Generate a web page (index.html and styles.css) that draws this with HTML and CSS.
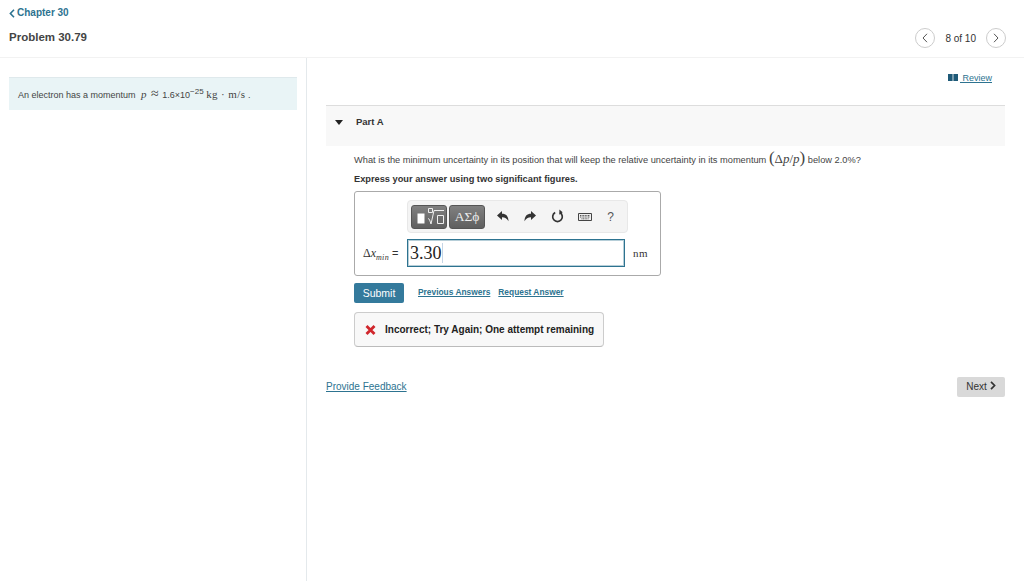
FILE: index.html
```html
<!DOCTYPE html>
<html lang="en">
<head>
    <meta charset="UTF-8">
    <title>Problem 30.79</title>
    <link rel="stylesheet" href="styles.css">
</head>
<body>
    <div class="header">
        <div class="header-titles">
            <a class="chapter-link" href="#"><svg class="chapter-arrow" width="6" height="9" viewBox="0 0 6 9"><path d="M5 .8 1.4 4.5 5 8.2" fill="none" stroke="#2d7390" stroke-width="1.6"/></svg>Chapter 30</a>
            <h1>Problem 30.79</h1>
        </div>
        <div class="pager">
            <span class="pager-btn"><svg width="6" height="10" viewBox="0 0 6 10"><path d="M5 .8 1 5l4 4.2" fill="none" stroke="#555" stroke-width="1"/></svg></span>
            <span class="pager-text">8 of 10</span>
            <span class="pager-btn"><svg width="6" height="10" viewBox="0 0 6 10"><path d="M1 .8 5 5 1 9.2" fill="none" stroke="#555" stroke-width="1"/></svg></span>
        </div>
    </div>
    <div class="main">
        <div class="sidebar">
            <div class="statement">An electron has a momentum <span class="math symbol-p"><i>p</i></span> <span class="math symbol-approx">≈</span> 1.6×10<sup class="exp">−25</sup> <span class="math unit-math">kg · m/s</span> .</div>
        </div>
        <div class="content">
            <div class="review-row">
                <a class="review" href="#"><svg class="review-icon" width="10" height="7" viewBox="0 0 10 7"><path d="M0 0h4.600v7H0zM5.400 0H10v7H5.400z" fill="#1f5a78"/></svg>&nbsp;Review</a>
            </div>
            <div class="part-head">
                <svg class="part-arrow" width="8" height="5" viewBox="0 0 8 5"><path d="M0 0h8L4 5z" fill="#222"/></svg>
                <span>Part A</span>
            </div>
            <div class="part-body">
                <p class="question">What is the minimum uncertainty in its position that will keep the relative uncertainty in its momentum <span class="math q-math"><span class="paren">(</span>Δ<i>p</i>/<i>p</i><span class="paren">)</span></span> below 2.0%?</p>
                <p class="express">Express your answer using two significant figures.</p>
                <div class="answer-box">
                    <div class="toolbar">
                        <span class="tool-dark tool-root">
                            <svg width="31" height="19" viewBox="0 0 31 19"><path d="M3.500 6.500h7v10h-7z" fill="#fff"/><path d="M14 11.500l1.500 1 1.500 4.500L20 3.500h10" fill="none" stroke="#eee" stroke-width="1"/><path d="M14.500 1.500h4v4h-4zM23.500 8.500h6v8h-6z" fill="none" stroke="#eee" stroke-width="1"/></svg>
                        </span>
                        <span class="tool-dark tool-greek">ΑΣϕ</span>
                        <span class="tool-icons">
                            <svg width="12" height="11" viewBox="0 0 12 11"><path d="M0 4.500 5 0v2.800c4 0 6.500 2.400 6.500 7.500C10 7.500 8 6.200 5 6.200V9z" fill="#333"/></svg>
                            <svg width="12" height="11" viewBox="0 0 12 11"><path d="M12 4.500 7 0v2.800c-4 0-6.500 2.400-6.500 7.500C2 7.500 4 6.200 7 6.200V9z" fill="#333"/></svg>
                            <svg width="13" height="15" viewBox="0 0 14 15"><path d="M9.500 3.200a5.200 5.200 0 1 1-5 0" fill="none" stroke="#333" stroke-width="1.800"/><path d="M9 0v5.500l3.500-2.700z" fill="#333"/></svg>
                            <svg width="14" height="8" viewBox="0 0 14 8"><path d="M.5.500h13v7H.5z" fill="#eee" stroke="#444"/><path d="M2 2.500h10M2 4h10M3.500 5.800h7" stroke="#555" stroke-dasharray="1 .6"/></svg>
                            <span class="tool-help">?</span>
                        </span>
                    </div>
                    <div class="answer-row">
                        <span class="answer-label"><span class="math">Δ<i>x</i><sub class="min-sub"><i>min</i></sub></span> =</span>
                        <div class="answer-input"><span class="answer-value">3.30</span><span class="caret"></span></div>
                        <span class="answer-unit">nm</span>
                    </div>
                </div>
                <div class="actions">
                    <a class="submit" href="#">Submit</a>
                    <div class="action-links">
                        <a href="#">Previous Answers</a>
                        <a href="#">Request Answer</a>
                    </div>
                </div>
                <div class="feedback">
                    <svg width="11" height="10" viewBox="0 0 11 10"><path d="M1.500 1 9.500 9M9.500 1 1.500 9" stroke="#d0262c" stroke-width="2.800"/></svg>
                    <span>Incorrect; Try Again; One attempt remaining</span>
                </div>
            </div>
            <div class="footer-row">
                <a class="provide" href="#">Provide Feedback</a>
                <a class="next" href="#">Next <svg width="6" height="9" viewBox="0 0 6 9"><path d="M1 .8 4.600 4.500 1 8.200" fill="none" stroke="#333" stroke-width="1.700"/></svg></a>
            </div>
        </div>
    </div>
</body>
</html>
```

FILE: styles.css
```css
html, body {
    height: 100%;
}
body {
    font-family: "Liberation Sans", Arial, sans-serif;
    background-color: #fff;
    color: #333;
    margin: 0;
    padding: 0;
    overflow: hidden;
    display: flex;
    flex-direction: column;
}
a {
    color: #2d7390;
}
.math {
    font-family: "Liberation Serif", "DejaVu Serif", serif;
}
.header {
    height: 58px;
    flex-shrink: 0;
    box-sizing: border-box;
    border-bottom: 1px solid #f2f2f2;
    display: flex;
    justify-content: space-between;
    padding: 7px 18px 0 9px;
}
.chapter-link {
    display: flex;
    align-items: center;
    gap: 2px;
    font-size: 10px;
    font-weight: bold;
    line-height: 12px;
    text-decoration: none;
}
.header h1 {
    margin: 11px 0 0;
    font-size: 11.500px;
    line-height: 14px;
    color: #444;
}
.pager {
    display: flex;
    align-items: center;
    height: 20px;
    margin-top: 21px;
}
.pager-btn {
    width: 18px;
    height: 18px;
    border: 1px solid #ccc;
    border-radius: 50%;
    display: flex;
    align-items: center;
    justify-content: center;
}
.pager-text {
    font-size: 10px;
    margin: 1px 10px 0;
    color: #333;
}
.main {
    flex: 1;
    display: flex;
}
.sidebar {
    width: 307px;
    flex-shrink: 0;
    box-sizing: border-box;
    border-right: 1px solid #e4e9ec;
    padding: 19px 9px 0;
}
.statement {
    background-color: #e9f4f6;
    border-top: 1px solid #dfe9ec;
    height: 33px;
    box-sizing: border-box;
    padding: 0 9px;
    line-height: 33px;
    font-size: 9px;
    color: #444;
    white-space: nowrap;
}
.statement .math {
    font-size: 11px;
}
.statement .symbol-p {
    margin-left: 3px;
}
.statement .symbol-approx {
    font-size: 14px;
    line-height: 0;
    margin: 0 1px 0 2px;
}
.statement .unit-math {
    letter-spacing: .4px;
}
.exp {
    font-size: 8px;
    line-height: 0;
}
.content {
    flex: 1;
    padding: 0 19px 0 19px;
}
.review-row {
    display: flex;
    justify-content: flex-end;
    height: 47px;
    padding: 14px 13px 0 0;
    box-sizing: border-box;
}
.review {
    font-size: 9px;
    line-height: 12px;
    height: 12px;
}
.review-icon {
    margin-right: 2px;
}
.part-head {
    height: 41px;
    box-sizing: border-box;
    border-top: 1px solid #ddd;
    background-color: #f8f8f8;
    display: flex;
    align-items: flex-start;
    padding: 10px 0 0 9px;
    gap: 13px;
    font-size: 9.500px;
    font-weight: bold;
    line-height: 12px;
}
.part-arrow {
    margin-top: 4px;
}
.part-body {
    padding: 0 0 0 28px;
}
.question {
    margin: 7px 0 0;
    font-size: 9.250px;
    line-height: 12px;
    height: 13px;
    white-space: nowrap;
    color: #444;
}
.q-math {
    font-size: 13px;
}
.paren {
    font-size: 17px;
    line-height: 0;
}
.express {
    margin: 7px 0 0;
    font-size: 9.250px;
    font-weight: bold;
    line-height: 12px;
}
.answer-box {
    width: 307px;
    height: 85px;
    box-sizing: border-box;
    margin-top: 6px;
    border: 1px solid #aaa;
    border-radius: 3px;
    padding: 8px 0 0 52px;
}
.toolbar {
    width: 221px;
    height: 33px;
    box-sizing: border-box;
    background-color: #f4f4f4;
    border: 1px solid #e8e8e8;
    border-radius: 4px;
    display: flex;
    align-items: center;
    padding: 0 3px;
    gap: 2px;
}
.tool-dark {
    height: 24px;
    box-sizing: border-box;
    border-radius: 3px;
    border: 1px solid #555;
    background: linear-gradient(#808080, #5f5f5f);
    color: #eee;
    display: flex;
    align-items: center;
    justify-content: center;
    font-family: "Liberation Serif", "DejaVu Serif", serif;
    font-size: 13.500px;
}
.tool-root {
    width: 36px;
}
.tool-greek {
    width: 36px;
}
.tool-icons {
    flex: 1;
    display: flex;
    align-items: center;
    justify-content: space-between;
    padding: 0 10px;
}
.tool-help {
    font-size: 12px;
    color: #555;
}
.answer-row {
    display: flex;
    align-items: center;
    margin: 6px 0 0 -44px;
}
.answer-label {
    width: 44px;
    font-size: 11px;
    white-space: nowrap;
    color: #333;
}
.answer-label .math {
    font-size: 12px;
}
.min-sub {
    font-size: 8px;
    line-height: 0;
    letter-spacing: .3px;
}
.answer-input {
    width: 218px;
    height: 28px;
    box-sizing: border-box;
    border: 1px solid #2d7390;
    display: flex;
    align-items: center;
    padding-left: 2px;
    box-shadow: inset 0 0 0 1px rgba(45, 115, 144, .35);
}
.answer-value {
    font-family: "Liberation Serif", serif;
    font-size: 18px;
    color: #222;
}
.caret {
    width: 1px;
    height: 20px;
    background-color: #c5d5e5;
}
.answer-unit {
    font-family: "Liberation Serif", serif;
    font-size: 11px;
    letter-spacing: .5px;
    margin-left: 8px;
}
.actions {
    display: flex;
    margin-top: 7px;
    align-items: flex-start;
}
.submit {
    width: 50px;
    height: 20px;
    background-color: #347a9c;
    color: #fff;
    border-radius: 2px;
    font-size: 10.500px;
    line-height: 20px;
    text-align: center;
    text-decoration: none;
}
.action-links {
    display: flex;
    gap: 8px;
    margin-left: 14px;
    font-size: 8.400px;
    font-weight: bold;
    line-height: 19px;
}
.feedback {
    width: 250px;
    height: 35px;
    box-sizing: border-box;
    margin-top: 9px;
    background-color: #f8f8f8;
    border: 1px solid #ccc;
    border-bottom-color: #bbb;
    border-radius: 4px;
    display: flex;
    align-items: center;
    gap: 9px;
    padding-left: 10px;
    font-size: 10px;
    font-weight: bold;
    color: #222;
    white-space: nowrap;
}
.footer-row {
    display: flex;
    justify-content: space-between;
    align-items: center;
    margin-top: 30px;
}
.provide {
    font-size: 10px;
    margin-top: -2px;
}
.next {
    width: 48px;
    height: 20px;
    background-color: #d9d9d9;
    border-radius: 2px;
    font-size: 10px;
    line-height: 20px;
    text-align: center;
    text-decoration: none;
    color: #333;
}
```
